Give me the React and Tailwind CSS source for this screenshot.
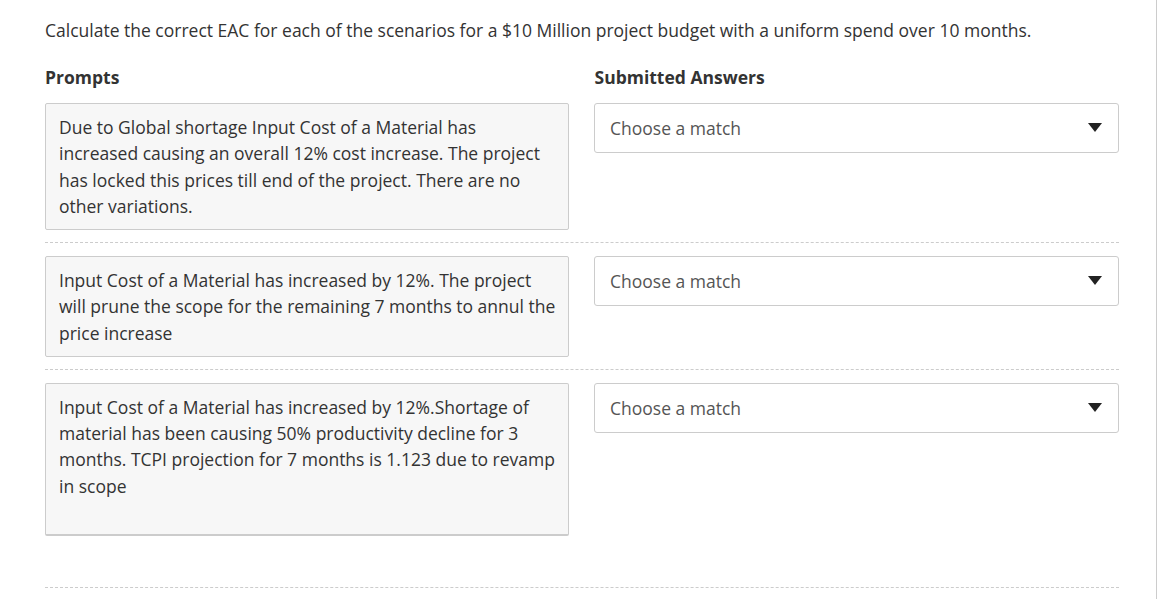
import React from 'react';

const rows = [
  {
    id: 1,
    text: 'Due to Global shortage Input Cost of a Material has increased causing an overall 12% cost increase. The project has locked this prices till end of the project. There are no other variations.',
  },
  {
    id: 2,
    text: 'Input Cost of a Material has increased by 12%. The project will prune the scope for the remaining 7 months to annul the price increase',
  },
  {
    id: 3,
    text: 'Input Cost of a Material has increased by 12%.Shortage of material has been causing 50% productivity decline for 3 months. TCPI projection for 7 months is 1.123 due to revamp in scope',
  },
];

function Select() {
  return (
    <div className="flex h-[50px] items-center justify-between rounded-[3px] border border-[#cccccc] bg-white pl-[15px] pr-[15px]">
      <span className="text-[17.5px] text-[#555555]">Choose a match</span>
      <svg width="14" height="10" viewBox="0 0 14 10" className="mr-[1px]">
        <path d="M0 0 H14 L7 9 Z" fill="#222222" />
      </svg>
    </div>
  );
}

export default function App() {
  return (
    <div className="min-h-[599px] w-[1157px] border-r border-[#cccccc] bg-white font-['Open_Sans',sans-serif] text-[#333333]">
      <div className="w-[1119px] pl-[45px] pt-[17px]">
        <p className="text-[17.5px] leading-[26px]">
          Calculate the correct EAC for each of the scenarios for a $10 Million project budget with a uniform spend over 10 months.
        </p>
        <div className="mt-[22px] grid grid-cols-2 gap-x-[25px]">
          <h3 className="text-[17.5px] font-bold leading-[24px] text-[#333333]">Prompts</h3>
          <h3 className="text-[17.5px] font-bold leading-[24px] text-[#333333]">Submitted Answers</h3>
        </div>
        <div className="mt-[14px]">
          {rows.map((r, i) => (
            <div
              key={r.id}
              className={
                i === rows.length - 1
                  ? 'pb-[51px] border-b border-dashed border-[#cccccc]'
                  : 'pb-[12px] mb-[13px] border-b border-dashed border-[#cccccc]'
              }
            >
              <div className="grid grid-cols-[524px_525px] gap-x-[25px] items-start">
                <div
                  className={
                    'rounded-[2px] border border-[#cccccc] bg-[#f7f7f7] pl-[13px] pr-[9px] py-[10px] text-[17.5px] leading-[1.5] ' +
                    (i === rows.length - 1 ? 'min-h-[153px] border-b-2' : '')
                  }
                >
                  {r.text}
                </div>
                <Select />
              </div>
            </div>
          ))}
        </div>
      </div>
    </div>
  );
}
